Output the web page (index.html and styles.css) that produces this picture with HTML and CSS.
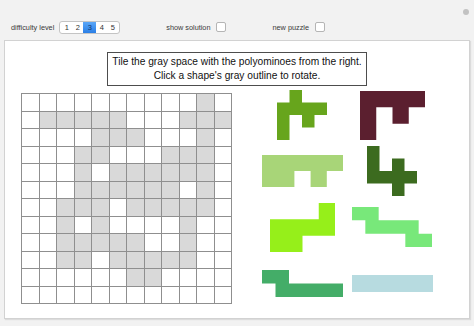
FILE: index.html
```html
<!DOCTYPE html>
<html lang="en">
<head>
    <meta charset="UTF-8">
    <title>Polyomino Tiling</title>
    <link rel="stylesheet" href="styles.css">
</head>
<body>
    <div class="topbar">
        <span class="label">difficulty level</span>
        <div class="segments">
            <span class="seg">1</span>
            <span class="seg">2</span>
            <span class="seg active">3</span>
            <span class="seg">4</span>
            <span class="seg">5</span>
        </div>
        <span class="label solution-label">show solution</span>
        <span class="checkbox"></span>
        <span class="label puzzle-label">new puzzle</span>
        <span class="checkbox"></span>
        <span class="corner-btn"></span>
    </div>

    <div class="panel">
        <div class="instructions">
            Tile the gray space with the polyominoes from the right.<br>
            Click a shape's gray outline to rotate.
        </div>

        <div class="play-area">
            <div class="board" id="board"></div>

            <div class="pieces">
                <div class="piece">
                    <svg width="50" height="50" viewBox="0 0 4 4" preserveAspectRatio="none"><polygon fill="#67a51c" points="1,0 2,0 2,1 4,1 4,2 3,2 3,3 2,3 2,2 1,2 1,4 0,4 0,1 1,1"/></svg>
                </div>
                <div class="piece">
                    <svg width="65" height="49" viewBox="0 0 4 3" preserveAspectRatio="none"><polygon fill="#5b1f2f" points="0,0 4,0 4,1 3,1 3,2 2,2 2,1 1,1 1,3 0,3"/></svg>
                </div>
                <div class="piece">
                    <svg width="81" height="32" viewBox="0 0 5 2" preserveAspectRatio="none"><polygon fill="#a8d578" points="0,0 5,0 5,1 4,1 4,2 3,2 3,1 2,1 2,2 0,2"/></svg>
                </div>
                <div class="piece">
                    <svg width="50" height="50" viewBox="0 0 4 4" preserveAspectRatio="none"><polygon fill="#3c6b1f" points="0,0 1,0 1,2 2,2 2,1 3,1 3,2 4,2 4,3 3,3 3,4 2,4 2,3 0,3"/></svg>
                </div>
                <div class="piece">
                    <svg width="65" height="49" viewBox="0 0 4 3" preserveAspectRatio="none"><polygon fill="#96ef1a" points="3,0 4,0 4,2 2,2 2,3 0,3 0,1 3,1"/></svg>
                </div>
                <div class="piece">
                    <svg width="80" height="40" viewBox="0 0 6 3" preserveAspectRatio="none"><polygon fill="#78e87a" points="0,0 2,0 2,1 5,1 5,2 6,2 6,3 4,3 4,2 1,2 1,1 0,1"/></svg>
                </div>
                <div class="piece">
                    <svg width="81" height="27" viewBox="0 0 6 2" preserveAspectRatio="none"><polygon fill="#44ad68" points="0,0 2,0 2,1 6,1 6,2 1,2 1,1 0,1"/></svg>
                </div>
                <div class="piece">
                    <svg width="81" height="17" viewBox="0 0 5 1" preserveAspectRatio="none"><rect fill="#b7dbe0" x="0" y="0" width="5" height="1"/></svg>
                </div>
            </div>
        </div>
    </div>

    <script>
        // gray space to tile: '#' = gray cell
        const pattern = [
            '..........#.',
            '.#####...###',
            '....###...#.',
            '...##...###.',
            '...#.######.',
            '...######.#.',
            '..###.#####.',
            '..#.#....#..',
            '..#####..#..',
            '..##.#####..',
            '......##....',
            '............'
        ];
        const board = document.getElementById('board');
        pattern.forEach(row => {
            for (const ch of row) {
                const cell = document.createElement('div');
                cell.className = ch === '#' ? 'cell gray' : 'cell';
                board.appendChild(cell);
            }
        });
    </script>
</body>
</html>
```

FILE: styles.css
```css
body {
    margin: 0;
    background-color: #f2f2f2;
    font-family: 'Liberation Sans', Arial, sans-serif;
    color: #333;
    width: 474px;
    height: 326px;
    overflow: hidden;
    position: relative;
}
.topbar {
    height: 40px;
    box-sizing: border-box;
    padding: 14px 0 0 11px;
    display: flex;
    align-items: center;
}
.label {
    font-size: 7.3px;
    color: #3a3a3a;
    line-height: 13px;
}
.segments {
    display: flex;
    margin-left: 5px;
    height: 13px;
    background: #fff;
    border: 1px solid #c4c4c4;
    border-radius: 3px;
    box-sizing: border-box;
    padding: 0 1px;
}
.seg {
    width: 11px;
    font-size: 7.5px;
    line-height: 11px;
    text-align: center;
    color: #333;
}
.seg.active {
    background: linear-gradient(#5aa6f7, #2a7fe6);
    color: #17386e;
    width: 13px;
}
.solution-label {
    margin-left: 46px;
}
.puzzle-label {
    margin-left: 46px;
}
.checkbox {
    width: 10px;
    height: 10px;
    margin-left: 6px;
    background: #fff;
    border: 1px solid #b5b5b5;
    border-radius: 2px;
    box-sizing: border-box;
}
.corner-btn {
    position: absolute;
    top: 9px;
    left: 463px;
    width: 6px;
    height: 6px;
    border-radius: 50%;
    background: #c2c2c2;
}
.panel {
    margin-left: 4px;
    width: 466px;
    height: 279px;
    box-sizing: border-box;
    background: #fff;
    border: 1px solid #d2d2d2;
    box-shadow: 1px 1px 1px #dcdcdc;
    padding-top: 11px;
}
.instructions {
    width: fit-content;
    margin: 0 auto;
    border: 1px solid #4d4d4d;
    padding: 2px 4px;
    font-size: 10.2px;
    line-height: 14px;
    text-align: center;
    color: #111;
}
.play-area {
    display: flex;
    align-items: flex-start;
    padding-left: 16px;
    margin-top: 1px;
}
.board {
    margin-top: 6px;
    width: 211px;
    height: 211px;
    box-sizing: border-box;
    display: grid;
    grid-template-columns: repeat(12, 1fr);
    grid-template-rows: repeat(12, 1fr);
    gap: 1px;
    padding: 1px;
    background: #8f8f8f;
}
.cell {
    background: #fff;
}
.cell.gray {
    background: #d9d9d9;
}
.pieces {
    margin-left: 25px;
    display: grid;
    grid-template-columns: 90px 90px;
    grid-auto-rows: 56px;
}
.piece {
    display: flex;
    align-items: center;
    justify-content: center;
}
.piece svg {
    display: block;
}
```
